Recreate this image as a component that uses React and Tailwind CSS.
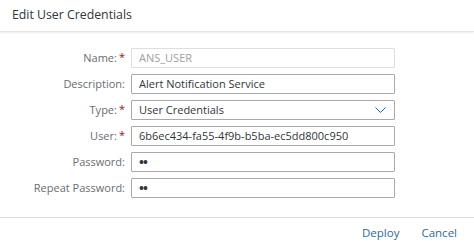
import React from 'react';

const fields = [
  { label: 'Name:', required: true, value: 'ANS_USER', disabled: true },
  { label: 'Description:', value: 'Alert Notification Service' },
  { label: 'Type:', required: true, value: 'User Credentials', select: true },
  { label: 'User:', required: true, value: '6b6ec434-fa55-4f9b-b5ba-ec5dd800c950' },
  { label: 'Password:', value: '••', password: true },
  { label: 'Repeat Password:', value: '••', password: true },
];

const Chevron = () => (
  <svg width="11" height="7" viewBox="0 0 11 7" className="text-[#0a6ed1]">
    <path d="M0.5 0.5 L5.5 5.5 L10.5 0.5" fill="none" stroke="currentColor" strokeWidth="1" />
  </svg>
);

const App = () => {
  return (
    <div
      className="w-[474px] h-[248px] bg-white flex flex-col overflow-hidden"
      style={{ fontFamily: '"Open Sans", "Liberation Sans", sans-serif' }}
    >
      {/* Header */}
      <div className="h-[32px] shrink-0 flex items-center pl-[12px] border-b border-[#e5e5e5] shadow-[0_1px_2px_rgba(0,0,0,0.08)]">
        <span className="text-[12.3px] text-[#32363a]">Edit User Credentials</span>
      </div>

      {/* Form */}
      <div className="flex-1 flex flex-col gap-[6px] pt-[16px]">
        {fields.map((f) => (
          <div key={f.label} className="flex items-center h-[20px]">
            <div className="w-[131px] shrink-0 flex justify-end items-start pr-[6px] text-[11px] text-[#6a6d70]">
              <span>{f.label}</span>
              {f.required && <span className="text-[#bb0000] ml-[2px] text-[11px] leading-[13px]">*</span>}
            </div>
            <div
              className={`w-[264px] h-[20px] flex items-center justify-between pl-[7px] pr-[8px] border rounded-[1px] text-[11px] ${
                f.disabled
                  ? 'border-[#dedede] text-[#a0a0a0]'
                  : 'border-[#a9a9a9] text-[#32363a]'
              }`}
            >
              <span className={f.password ? 'text-[13px] font-bold tracking-[-1px] leading-none' : ''}>{f.value}</span>
              {f.select && <Chevron />}
            </div>
          </div>
        ))}
      </div>

      {/* Footer */}
      <div className="h-[31px] shrink-0 border-t border-[#dcdcdc] flex items-center justify-end gap-[22px] pr-[17px] text-[11.5px] text-[#2c6aa6]">
        <span>Deploy</span>
        <span>Cancel</span>
      </div>
    </div>
  );
};

export default App;
